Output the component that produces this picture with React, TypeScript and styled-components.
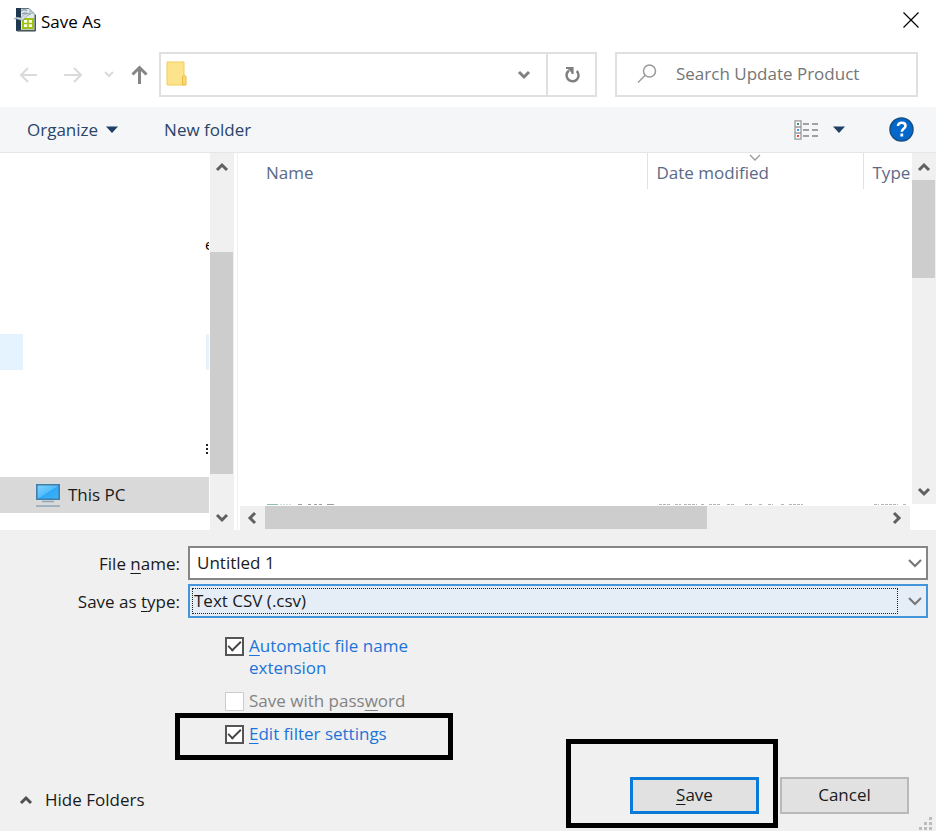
import React from "react";
import styled, { createGlobalStyle, css } from "styled-components";

const GlobalStyle = createGlobalStyle`
  *, *::before, *::after { box-sizing: border-box; }
  body { margin: 0; background: #fff; }
  body, button, input, select {
    font-family: "Open Sans", "Noto Sans", sans-serif;
    font-size: 17px;
    line-height: 22px;
    color: #1a1a1a;
  }
  button, input, select { margin: 0; padding: 0; border: 0; border-radius: 0; background: none; }
  svg { display: block; flex: none; }
  u { text-underline-offset: 3px; text-decoration-thickness: 1px; }
`;

const Dialog = styled.div`
  display: flex;
  flex-direction: column;
  min-height: 100vh;
  background: #fff;
`;

const TitleBar = styled.header`
  display: flex;
  align-items: center;
  height: 44px;
  padding: 0 14px 4px 14px;
  gap: 5px;
`;

const Title = styled.h1`
  flex: 1;
  margin: 0;
  padding-top: 3px;
  font-size: 17px;
  font-weight: 400;
  color: #000;
`;

const IconButton = styled.button`
  display: flex;
  align-items: center;
  justify-content: center;
  width: 22px;
  height: 22px;
`;

const NavBar = styled.nav`
  display: flex;
  align-items: stretch;
  height: 45px;
  margin: 8px 18px 10px 18px;
`;

const NavButtons = styled.div`
  display: flex;
  align-items: center;
  width: 141px;
`;

const NavButton = styled.button<{ $width: number }>`
  display: flex;
  align-items: center;
  width: ${(p) => p.$width}px;
`;

const Address = styled.div`
  display: flex;
  align-items: center;
  flex: 1;
  border: 2px solid #e0e0e0;
  padding-left: 5px;
`;

const AddressInput = styled.input`
  flex: 1;
  min-width: 0;
  outline: 0;
`;

const AddressButton = styled.button<{ $divided?: boolean }>`
  display: flex;
  align-items: center;
  justify-content: center;
  align-self: stretch;
  width: ${(p) => (p.$divided ? 49 : 44)}px;
  ${(p) => p.$divided && css`border-left: 2px solid #e0e0e0;`}
`;

const SearchBox = styled.label`
  display: flex;
  align-items: center;
  width: 303px;
  margin-left: 18px;
  padding: 0 0 2px 20px;
  gap: 19px;
  border: 2px solid #e0e0e0;
`;

const SearchInput = styled.input`
  flex: 1;
  min-width: 0;
  outline: 0;
  &::placeholder { color: #757575; opacity: 1; }
`;

const Toolbar = styled.div`
  display: flex;
  align-items: center;
  height: 46px;
  padding: 0 24px 0 27px;
  background: #f4f6f8;
  border-bottom: 1px solid #e4e7ea;
`;

const ToolButton = styled.button`
  display: flex;
  align-items: center;
  gap: 8px;
  margin-right: 46px;
  color: #2b4468;
`;

const ViewButton = styled.button`
  display: flex;
  align-items: center;
  gap: 14px;
  margin-left: auto;
  margin-right: 45px;
`;

const Browser = styled.main`
  display: flex;
  flex: 1;
  min-height: 240px;
`;

const Tree = styled.aside`
  display: grid;
  grid-template-rows: 80fr 22px 80fr 36px 68fr 22px 17px 36px 17px;
  width: 209px;
`;

const ClippedLabel = styled.span`
  justify-self: end;
  width: 4px;
  overflow: hidden;
  color: #000;
  font-size: 15px;
`;

const HoverRow = styled.div`
  grid-row: 4;
  display: flex;
  justify-content: space-between;
`;

const HoverEdge = styled.span<{ $width: number }>`
  width: ${(p) => p.$width}px;
  background: #e5f3ff;
`;

const SelectedRow = styled.a`
  grid-row: 8;
  display: flex;
  align-items: center;
  gap: 7px;
  padding-left: 35px;
  background: #d9d9d9;
  color: #1a1a1a;
  text-decoration: none;
`;

const VScroll = styled.div<{ $start: number; $thumb: number; $rest: number }>`
  display: grid;
  grid-template-rows: 27px ${(p) => p.$start}fr ${(p) => p.$thumb}fr ${(p) => p.$rest}fr 25px;
  width: 24px;
  margin-left: 1px;
  background: #f0f0f0;
`;

const HScroll = styled.div`
  display: grid;
  grid-template-columns: 25px 443fr 178fr 25px;
  height: 24px;
  margin-right: 1px;
  background: #f0f0f0;
`;

const ScrollButton = styled.button`
  display: flex;
  align-items: center;
  justify-content: center;
  padding-right: 1px;
`;

const VThumb = styled.div`
  grid-row: 3;
  margin-right: 1px;
  background: #cdcdcd;
`;

const HThumb = styled.div`
  grid-column: 2;
  margin-bottom: 1px;
  background: #cdcdcd;
`;

const VEnd = styled(ScrollButton)`
  grid-row: 5;
`;

const HEnd = styled(ScrollButton)`
  grid-column: 4;
`;

const Splitter = styled.div`
  width: 6px;
  border-left: 3px solid #fff;
  border-right: 2px solid #fff;
  background: #f0f0f0;
`;

const Files = styled.section`
  display: grid;
  grid-template-columns: minmax(0, 1fr) 25px;
  grid-template-rows: 1fr 2px 24px;
  flex: 1;
  min-width: 0;
`;

const FileView = styled.div`
  grid-column: 1;
  grid-row: 1 / 3;
  display: flex;
  flex-direction: column;
  justify-content: space-between;
`;

const ScrollRow = styled.div`
  grid-row: 3;
`;

const FileTable = styled.table`
  width: 100%;
  table-layout: fixed;
  border-collapse: collapse;
`;

const HeadCell = styled.th<{ $width?: number; $first?: boolean }>`
  position: relative;
  height: 36px;
  width: ${(p) => (p.$width ? `${p.$width}px` : "auto")};
  padding: 3px 0 0 ${(p) => (p.$first ? 26 : 9)}px;
  border-left: ${(p) => (p.$first ? "0" : "1px solid #e2e2e2")};
  text-align: left;
  font-weight: 400;
  color: #5a6a86;
  white-space: nowrap;
`;

const SortMark = styled.svg`
  position: absolute;
  top: 1px;
  left: 50%;
  margin-left: -6px;
`;

const Peek = styled.div`
  display: grid;
  grid-template-columns: minmax(0, 1fr) 216px 48px;
  height: 2px;
`;

const PeekCell = styled.div<{ $first?: boolean }>`
  padding-left: ${(p) => (p.$first ? 27 : 10)}px;
`;

const Footer = styled.form`
  display: flex;
  flex-direction: column;
  padding: 16px 8px 0 0;
  background: #f0f0f0;
`;

const Fields = styled.div`
  display: grid;
  grid-template-columns: 180px minmax(0, 1fr);
  grid-auto-rows: 34px;
  gap: 4px 8px;
  align-items: center;
`;

const FieldLabel = styled.label`
  padding-top: 1px;
  text-align: right;
`;

const Combo = styled.div<{ $focused?: boolean }>`
  display: flex;
  align-items: stretch;
  height: 34px;
  padding: ${(p) => (p.$focused ? "2px 0 2px 2px" : "0 0 0 7px")};
  border: 2px solid ${(p) => (p.$focused ? "#4495da" : "#858585")};
  background: ${(p) => (p.$focused ? "#e5edf7" : "#fff")};
`;

const ComboInput = styled.input`
  flex: 1;
  min-width: 0;
  outline: 0;
`;

const ComboSelect = styled.select`
  flex: 1;
  min-width: 0;
  appearance: none;
  outline: 0;
  border: 1px dotted #222;
  padding-left: 1px;
`;

const ComboArrow = styled.span`
  display: flex;
  align-items: center;
  justify-content: flex-end;
  width: 28px;
  padding-right: 4px;
`;

const Options = styled.div`
  display: flex;
  flex-direction: column;
  align-items: flex-start;
  gap: 11px;
  padding: 17px 0 0 225px;
`;

const Option = styled.label<{ $disabled?: boolean }>`
  position: relative;
  display: flex;
  align-items: flex-start;
  gap: 5px;
  color: ${(p) => (p.$disabled ? "#838383" : "#1c74d8")};
`;

const OptionText = styled.span`
  max-width: 180px;
`;

const CheckBox = styled.input`
  appearance: none;
  display: grid;
  width: 19px;
  height: 19px;
  margin-top: 2px;
  border: 2px solid #555;
  background: #fff;
  &:disabled { border: 1px solid #ccc; }
  &:checked::before {
    content: "";
    width: 13px;
    height: 7px;
    margin: 2px 0 0 1px;
    border: solid #444;
    border-width: 0 0 2px 2px;
    transform: rotate(-45deg);
  }
`;

const Callout = styled.span<{ $w: number; $h: number; $left: number; $top: number }>`
  position: absolute;
  left: ${(p) => p.$left}px;
  top: ${(p) => p.$top}px;
  width: ${(p) => p.$w}px;
  height: ${(p) => p.$h}px;
  border: 5px solid #000;
  pointer-events: none;
`;

const Actions = styled.div`
  display: flex;
  align-items: center;
  margin-top: 32px;
  padding: 0 19px 17px 19px;
`;

const HideFolders = styled.button`
  display: flex;
  align-items: center;
  gap: 12px;
  margin-right: auto;
  padding-top: 8px;
`;

const SaveSlot = styled.div`
  position: relative;
  margin-right: 21px;
`;

const ActionButton = styled.button<{ $primary?: boolean }>`
  display: block;
  width: 129px;
  height: 37px;
  padding-bottom: 1px;
  background: #e1e1e1;
  border: ${(p) => (p.$primary ? "3px solid #0a7ad8" : "2px solid #b9b9b9")};
`;

const Grip = styled.svg`
  position: absolute;
  right: 4px;
  bottom: 1px;
`;

const FooterShell = styled.div`
  position: relative;
`;

type Dir = "up" | "down" | "left" | "right";
const chevrons: Record<Dir, string> = {
  up: "M2 10 L7 5 L12 10",
  down: "M2 4 L7 9 L12 4",
  left: "M10 2 L5 7 L10 12",
  right: "M4 2 L9 7 L4 12",
};

function Chevron({ dir, color = "#606060" }: { dir: Dir; color?: string }) {
  return (
    <svg width="14" height="14" viewBox="0 0 14 14" fill="none" stroke={color} strokeWidth="3">
      <path d={chevrons[dir]} />
    </svg>
  );
}

function ComboChevron() {
  return (
    <svg width="14" height="9" viewBox="0 0 14 9" fill="none" stroke="#757575" strokeWidth="2">
      <path d="M1 1l6 6 6-6" />
    </svg>
  );
}

function Caret() {
  return (
    <svg width="12" height="7" viewBox="0 0 12 7">
      <path d="M0 .5h12L6 7z" fill="#1e3f66" />
    </svg>
  );
}

function CalcIcon() {
  return (
    <svg width="22" height="24" viewBox="0 0 22 24">
      <path d="M3 .5h12l6 6V23H3z" fill="#e3e8ea" stroke="#617783" />
      <path d="M2 0h5v23H2z" fill="#1f3850" />
      <path d="M3 22.500h18.500V7" fill="none" stroke="#4b5a55" strokeWidth="1.500" />
      <path d="M15 1v5h5z" fill="#b9c9d0" />
      <path d="M7 3c3-2 5-1 6 0M8 6c3-2 5-1 7 1" fill="none" stroke="#8fa3b2" strokeWidth="1.500" />
      <path d="M9 11h10v9H9z" fill="#fbfde8" stroke="#9dc414" strokeWidth="2" />
      <path d="M14 11v9M9 15.500h10" stroke="#9dc414" strokeWidth="1.600" />
      <path d="M0 11c3-3 5-1 7-1 2-4 6-5 10-4-4 1-5 3-8 6-3 1-5-2-9-1z" fill="#d2dbe1" stroke="#8498a6" strokeWidth=".6" />
    </svg>
  );
}

export default function App() {
  return (
    <Dialog>
      <GlobalStyle />
      <TitleBar>
        <CalcIcon />
        <Title>Save As</Title>
        <IconButton aria-label="Close">
          <svg width="16" height="16" viewBox="0 0 16 16" stroke="#000" strokeWidth="1.200">
            <path d="M.5.5l15 15M15.500.5l-15 15" />
          </svg>
        </IconButton>
      </TitleBar>

      <NavBar>
        <NavButtons>
          <NavButton $width={45} aria-label="Back" disabled>
            <svg width="20" height="16" viewBox="0 0 20 16" fill="none" stroke="#dadada" strokeWidth="2">
              <path d="M19 8H3M10 1L3 8l7 7" />
            </svg>
          </NavButton>
          <NavButton $width={41} aria-label="Forward" disabled>
            <svg width="20" height="16" viewBox="0 0 20 16" fill="none" stroke="#dadada" strokeWidth="2">
              <path d="M1 8h17M11 1l7 7-7 7" />
            </svg>
          </NavButton>
          <NavButton $width={27} aria-label="Recent locations" disabled>
            <svg width="10" height="7" viewBox="0 0 10 7" fill="none" stroke="#dadada" strokeWidth="2">
              <path d="M1 1l4 4 4-4" />
            </svg>
          </NavButton>
          <NavButton $width={28} aria-label="Up">
            <svg width="17" height="19" viewBox="0 0 17 19" fill="none" stroke="#858585" strokeWidth="3">
              <path d="M8.500 19V3M1.500 9.500l7-7 7 7" />
            </svg>
          </NavButton>
        </NavButtons>
        <Address>
          <svg width="21" height="28" viewBox="0 0 21 28">
            <path d="M1 1h17v23H1z" fill="#fde48c" stroke="#f2cd5c" />
            <path d="M16.500 24v-8c0-2 3.500-2 3.500 0v8z" fill="#fbd96e" stroke="#e9bd45" />
          </svg>
          <AddressInput aria-label="Address" />
          <AddressButton type="button" aria-label="Previous locations">
            <Chevron dir="down" color="#808080" />
          </AddressButton>
          <AddressButton type="button" $divided aria-label="Refresh">
            <svg width="16" height="18" viewBox="0 0 16 18" fill="none" stroke="#808080" strokeWidth="2.500">
              <path d="M12.700 5A6 6 0 1 1 5 4.500" />
              <path d="M2 2h6.500v6" strokeWidth="2.200" />
              <path d="M4 3h4v4z" fill="#808080" stroke="none" />
            </svg>
          </AddressButton>
        </Address>
        <SearchBox>
          <svg width="20" height="20" viewBox="0 0 20 20" fill="none" stroke="#999" strokeWidth="1.500">
            <circle cx="12.500" cy="7" r="6" />
            <path d="M8 11.500L1 18.500" />
          </svg>
          <SearchInput placeholder="Search Update Product" aria-label="Search" />
        </SearchBox>
      </NavBar>

      <Toolbar>
        <ToolButton>
          Organize <Caret />
        </ToolButton>
        <ToolButton>New folder</ToolButton>
        <ViewButton aria-label="Change view">
          <svg width="25" height="20" viewBox="0 0 25 20" fill="none" stroke="#999">
            <path d="M1 .8h6v18.400H1zM1 7h6M1 13h6" strokeWidth="1.300" fill="#fff" />
            <path d="M9 4h6m3 0h6M9 10h6m3 0h6M9 16h6m3 0h6" strokeWidth="1.500" stroke="#858585" />
            <path d="M3 3h2v2H3z" fill="#41936d" stroke="none" />
            <path d="M3 9h2v2H3z" fill="#4a90ee" stroke="none" />
            <path d="M3 15h2v2H3z" fill="#e34545" stroke="none" />
          </svg>
          <Caret />
        </ViewButton>
        <IconButton aria-label="Help">
          <svg width="25" height="25" viewBox="0 0 25 25">
            <circle cx="12.500" cy="12.500" r="11.500" fill="#0268cc" stroke="#164f86" strokeWidth="1.500" />
            <path d="M9 9c0-4.500 7.500-4 7.500-.3 0 3-3.700 3-3.700 6" fill="none" stroke="#fff" strokeWidth="2.600" />
            <path d="M11.400 16.500h2.800v3h-2.800z" fill="#fff" />
          </svg>
        </IconButton>
      </Toolbar>

      <Browser>
        <Tree>
          <span />
          <ClippedLabel>e</ClippedLabel>
          <span />
          <HoverRow>
            <HoverEdge $width={23} />
            <HoverEdge $width={3} />
          </HoverRow>
          <span />
          <ClippedLabel>
            <svg width="4" height="22" viewBox="0 0 4 22" fill="#222">
              <path d="M1 6h2v2H1zM1 10h2v2H1zM1 14h2v2H1z" />
            </svg>
          </ClippedLabel>
          <SelectedRow href="#this-pc">
            <svg width="26" height="24" viewBox="0 0 26 24">
              <defs>
                <linearGradient id="screen" x2="1" y2="1">
                  <stop stopColor="#86d2fb" />
                  <stop offset=".5" stopColor="#52bdfb" />
                  <stop offset=".52" stopColor="#2fa9f7" />
                  <stop offset="1" stopColor="#3bb3fa" />
                </linearGradient>
              </defs>
              <path d="M1.800 1.800h22.400v14.400H1.800z" fill="url(#screen)" stroke="#3f7fa9" strokeWidth="1.600" />
              <path d="M7 18.500h12M1 23h24" stroke="#8fa6bc" strokeWidth="1.600" />
            </svg>
            This PC
          </SelectedRow>
        </Tree>
        <VScroll $start={72} $thumb={222} $rest={31}>
          <ScrollButton aria-label="Scroll folders up"><Chevron dir="up" /></ScrollButton>
          <VThumb />
          <VEnd aria-label="Scroll folders down"><Chevron dir="down" /></VEnd>
        </VScroll>
        <Splitter />
        <Files>
          <FileView>
            <FileTable>
              <thead>
                <tr>
                  <HeadCell $first>Name</HeadCell>
                  <HeadCell $width={216}>
                    Date modified
                    <SortMark width="12" height="7" viewBox="0 0 12 7" fill="none" stroke="#999" strokeWidth="1.300">
                      <path d="M1 1l5 5 5-5" />
                    </SortMark>
                  </HeadCell>
                  <HeadCell $width={48}>Type</HeadCell>
                </tr>
              </thead>
            </FileTable>
            <Peek>
              <PeekCell $first>
                <svg width="70" height="2" viewBox="0 0 70 2">
                  <path d="M0 .5h11" stroke="#8fbfaa" />
                  <path d="M13 .5h12" stroke="#c8e0d6" strokeDasharray="2 1" />
                  <path d="M31 .5h4M41 .5h3M47 .5h3M52 .5h3M60 .5h7" stroke="#a39aa5" />
                </svg>
              </PeekCell>
              <PeekCell>
                <svg width="150" height="2" viewBox="0 0 150 2" stroke="#b5b5b5">
                  <path d="M2 .5h12M18 .5h6M27 .5h13M44 .5h3M52 .5h12M70 .5h8M88 .5h8M102 .5h4M111 .5h5M124 .5h4M132 .5h14" strokeDasharray="3 1" />
                </svg>
              </PeekCell>
              <PeekCell>
                <svg width="34" height="2" viewBox="0 0 34 2" stroke="#b5b5b5">
                  <path d="M1 .5h5M8 .5h17M30 .5h3" strokeDasharray="3 1" />
                </svg>
              </PeekCell>
            </Peek>
          </FileView>
          <VScroll $start={0} $thumb={98} $rest={202}>
            <ScrollButton aria-label="Scroll files up"><Chevron dir="up" /></ScrollButton>
            <VThumb />
            <VEnd aria-label="Scroll files down"><Chevron dir="down" /></VEnd>
          </VScroll>
          <ScrollRow>
            <HScroll>
              <ScrollButton aria-label="Scroll files left"><Chevron dir="left" /></ScrollButton>
              <HThumb />
              <HEnd aria-label="Scroll files right"><Chevron dir="right" /></HEnd>
            </HScroll>
          </ScrollRow>
        </Files>
      </Browser>

      <FooterShell>
        <Footer onSubmit={(e: React.FormEvent) => e.preventDefault()}>
          <Fields>
            <FieldLabel htmlFor="file-name">File <u>n</u>ame:</FieldLabel>
            <Combo>
              <ComboInput id="file-name" defaultValue="Untitled 1" />
              <ComboArrow><ComboChevron /></ComboArrow>
            </Combo>
            <FieldLabel htmlFor="file-type">Save as <u>t</u>ype:</FieldLabel>
            <Combo $focused>
              <ComboSelect id="file-type">
                <option>Text CSV (.csv)</option>
              </ComboSelect>
              <ComboArrow><ComboChevron /></ComboArrow>
            </Combo>
          </Fields>
          <Options>
            <Option>
              <CheckBox type="checkbox" defaultChecked />
              <OptionText><u>A</u>utomatic file name extension</OptionText>
            </Option>
            <Option $disabled>
              <CheckBox type="checkbox" disabled />
              <OptionText>Save with pass<u>w</u>ord</OptionText>
            </Option>
            <Option>
              <CheckBox type="checkbox" defaultChecked />
              <OptionText><u>E</u>dit filter settings</OptionText>
              <Callout $w={278} $h={47} $left={-50} $top={-10} />
            </Option>
          </Options>
          <Actions>
            <HideFolders type="button">
              <Chevron dir="up" color="#505050" />
              Hide Folders
            </HideFolders>
            <SaveSlot>
              <ActionButton type="submit" $primary><u>S</u>ave</ActionButton>
              <Callout $w={212} $h={89} $left={-64} $top={-38} />
            </SaveSlot>
            <ActionButton type="button">Cancel</ActionButton>
          </Actions>
        </Footer>
        <Grip width="13" height="13" viewBox="0 0 13 13" fill="#bcbcbc">
          <path d="M10 0h3v3h-3zM5 5h3v3H5zM10 5h3v3h-3zM0 10h3v3H0zM5 10h3v3H5zM10 10h3v3h-3z" />
        </Grip>
      </FooterShell>
    </Dialog>
  );
}
